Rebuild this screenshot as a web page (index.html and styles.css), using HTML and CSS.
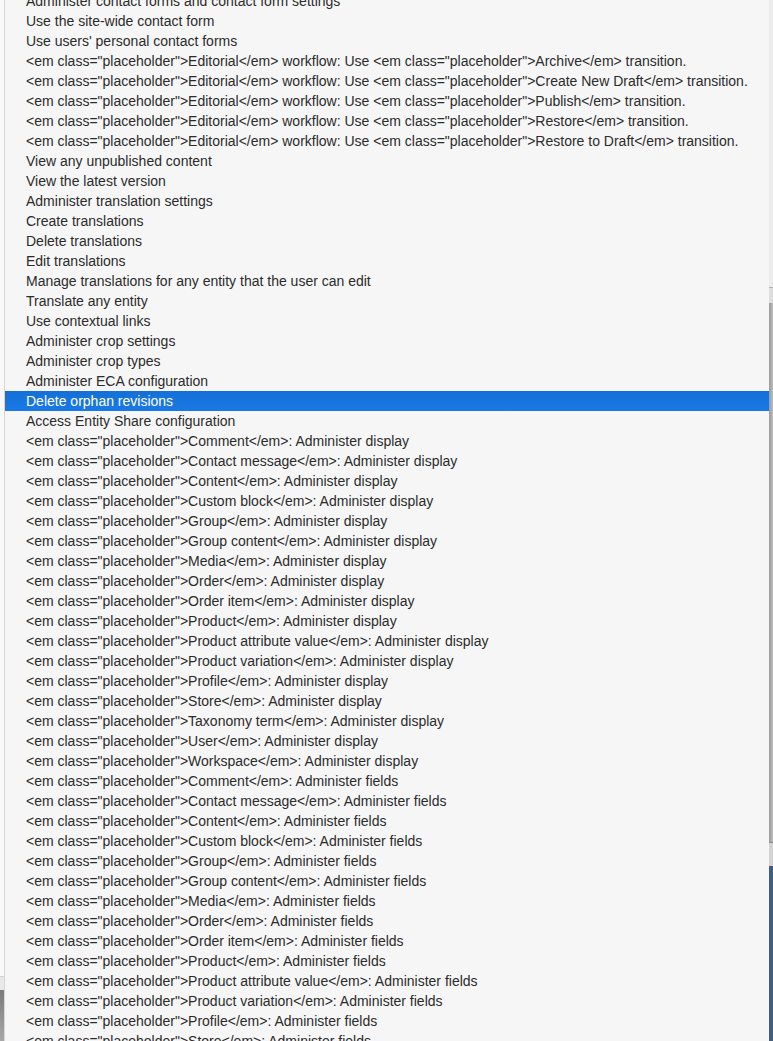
FILE: index.html
```html
<!doctype html>
<html>
<head>
<meta charset="UTF-8">
<title>Permissions</title>
<link rel="stylesheet" href="styles.css">
</head>
<body>
<div class="ikkuna">
    <div class="reunaVasen">
        <div class="vasenYla"></div>
        <div class="vasenViiva"></div>
        <div class="vasenVali"></div>
        <div class="vasenAla"></div>
    </div>

    <div class="valikko">
        <ul class="lista">
            <li>Administer contact forms and contact form settings</li>
            <li>Use the site-wide contact form</li>
            <li>Use users' personal contact forms</li>
            <li>&lt;em class="placeholder"&gt;Editorial&lt;/em&gt; workflow: Use &lt;em class="placeholder"&gt;Archive&lt;/em&gt; transition.</li>
            <li>&lt;em class="placeholder"&gt;Editorial&lt;/em&gt; workflow: Use &lt;em class="placeholder"&gt;Create New Draft&lt;/em&gt; transition.</li>
            <li>&lt;em class="placeholder"&gt;Editorial&lt;/em&gt; workflow: Use &lt;em class="placeholder"&gt;Publish&lt;/em&gt; transition.</li>
            <li>&lt;em class="placeholder"&gt;Editorial&lt;/em&gt; workflow: Use &lt;em class="placeholder"&gt;Restore&lt;/em&gt; transition.</li>
            <li>&lt;em class="placeholder"&gt;Editorial&lt;/em&gt; workflow: Use &lt;em class="placeholder"&gt;Restore to Draft&lt;/em&gt; transition.</li>
            <li>View any unpublished content</li>
            <li>View the latest version</li>
            <li>Administer translation settings</li>
            <li>Create translations</li>
            <li>Delete translations</li>
            <li>Edit translations</li>
            <li>Manage translations for any entity that the user can edit</li>
            <li>Translate any entity</li>
            <li>Use contextual links</li>
            <li>Administer crop settings</li>
            <li>Administer crop types</li>
            <li>Administer ECA configuration</li>
            <li class="valittu">Delete orphan revisions</li>
            <li>Access Entity Share configuration</li>
            <li>&lt;em class="placeholder"&gt;Comment&lt;/em&gt;: Administer display</li>
            <li>&lt;em class="placeholder"&gt;Contact message&lt;/em&gt;: Administer display</li>
            <li>&lt;em class="placeholder"&gt;Content&lt;/em&gt;: Administer display</li>
            <li>&lt;em class="placeholder"&gt;Custom block&lt;/em&gt;: Administer display</li>
            <li>&lt;em class="placeholder"&gt;Group&lt;/em&gt;: Administer display</li>
            <li>&lt;em class="placeholder"&gt;Group content&lt;/em&gt;: Administer display</li>
            <li>&lt;em class="placeholder"&gt;Media&lt;/em&gt;: Administer display</li>
            <li>&lt;em class="placeholder"&gt;Order&lt;/em&gt;: Administer display</li>
            <li>&lt;em class="placeholder"&gt;Order item&lt;/em&gt;: Administer display</li>
            <li>&lt;em class="placeholder"&gt;Product&lt;/em&gt;: Administer display</li>
            <li>&lt;em class="placeholder"&gt;Product attribute value&lt;/em&gt;: Administer display</li>
            <li>&lt;em class="placeholder"&gt;Product variation&lt;/em&gt;: Administer display</li>
            <li>&lt;em class="placeholder"&gt;Profile&lt;/em&gt;: Administer display</li>
            <li>&lt;em class="placeholder"&gt;Store&lt;/em&gt;: Administer display</li>
            <li>&lt;em class="placeholder"&gt;Taxonomy term&lt;/em&gt;: Administer display</li>
            <li>&lt;em class="placeholder"&gt;User&lt;/em&gt;: Administer display</li>
            <li>&lt;em class="placeholder"&gt;Workspace&lt;/em&gt;: Administer display</li>
            <li>&lt;em class="placeholder"&gt;Comment&lt;/em&gt;: Administer fields</li>
            <li>&lt;em class="placeholder"&gt;Contact message&lt;/em&gt;: Administer fields</li>
            <li>&lt;em class="placeholder"&gt;Content&lt;/em&gt;: Administer fields</li>
            <li>&lt;em class="placeholder"&gt;Custom block&lt;/em&gt;: Administer fields</li>
            <li>&lt;em class="placeholder"&gt;Group&lt;/em&gt;: Administer fields</li>
            <li>&lt;em class="placeholder"&gt;Group content&lt;/em&gt;: Administer fields</li>
            <li>&lt;em class="placeholder"&gt;Media&lt;/em&gt;: Administer fields</li>
            <li>&lt;em class="placeholder"&gt;Order&lt;/em&gt;: Administer fields</li>
            <li>&lt;em class="placeholder"&gt;Order item&lt;/em&gt;: Administer fields</li>
            <li>&lt;em class="placeholder"&gt;Product&lt;/em&gt;: Administer fields</li>
            <li>&lt;em class="placeholder"&gt;Product attribute value&lt;/em&gt;: Administer fields</li>
            <li>&lt;em class="placeholder"&gt;Product variation&lt;/em&gt;: Administer fields</li>
            <li>&lt;em class="placeholder"&gt;Profile&lt;/em&gt;: Administer fields</li>
            <li>&lt;em class="placeholder"&gt;Store&lt;/em&gt;: Administer fields</li>
        </ul>
    </div>

    <div class="reunaOikea">
        <div class="oikeaYla"></div>
        <div class="oikeaViiva"></div>
        <div class="oikeaVali"></div>
        <div class="oikeaPalkki"></div>
        <div class="oikeaViiva2"></div>
        <div class="oikeaVali2"></div>
        <div class="oikeaSini"></div>
    </div>
</div>
</body>
</html>
```

FILE: styles.css
```css
html, body {
    margin: 0;
    padding: 0;
    height: 100%;
    overflow: hidden;
    background-color: #f2f2f2;
}

.ikkuna {
    display: flex;
    height: 1041px;
    overflow: hidden;
}

/* vasen reuna */
.reunaVasen {
    width: 4px;
    display: flex;
    flex-direction: column;
    flex-shrink: 0;
}

.vasenYla {
    height: 976px;
    background-color: #f9f9f9;
}

.vasenViiva {
    height: 1px;
    background-color: #cfcfcf;
}

.vasenVali {
    height: 13px;
    background-color: #e9e9e9;
}

.vasenAla {
    flex: 1;
    background: linear-gradient(#7b7b7b, #a8a8a8);
}

/* itse valikko */
.valikko {
    width: 764px;
    flex-shrink: 0;
    background-color: #f6f6f6;
    border-left: 1px solid #d6d6d6;
    overflow: hidden;
}

.lista {
    list-style: none;
    margin: -9px 0 0 0;
    padding: 0;
    font-family: "Liberation Sans", Arial, sans-serif;
    font-size: 14px;
    color: #2b2b2b;
}

.lista li {
    height: 20px;
    line-height: 20px;
    padding-left: 21px;
    white-space: nowrap;
}

.lista li.valittu {
    background: linear-gradient(#1470d6, #1979e6);
    color: #ffffff;
}

/* oikea reuna */
.reunaOikea {
    flex: 1;
    display: flex;
    flex-direction: column;
}

.oikeaYla {
    height: 287px;
    background-color: #ececec;
}

.oikeaViiva {
    height: 1px;
    background-color: #b4b4b4;
}

.oikeaVali {
    height: 15px;
    background-color: #dedede;
}

.oikeaPalkki {
    height: 539px;
    background: linear-gradient(to right, #9a9a9a, #bdbdbd);
}

.oikeaViiva2 {
    height: 1px;
    background-color: #8c8c8c;
}

.oikeaVali2 {
    height: 23px;
    background-color: #d3d3d3;
}

.oikeaSini {
    flex: 1;
    background-color: #3b5d8a;
}
```
